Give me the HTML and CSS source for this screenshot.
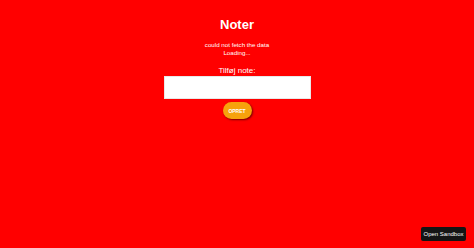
FILE: index.html
```html
<!DOCTYPE html>
<html lang="da">
<head>
<meta charset="utf-8">
<title>Noter</title>
<link rel="stylesheet" href="styles.css">
</head>
<body>
<div class="app">
  <h1 class="title">Noter</h1>
  <div class="status">
    <div>could not fetch the data</div>
    <div>Loading...</div>
  </div>
  <label class="label" for="note">Tilføj note:</label>
  <input class="note-input" id="note" type="text">
  <button class="create-btn" type="button">OPRET</button>
</div>
<a class="sandbox-btn" href="#">Open Sandbox</a>
</body>
</html>
```
FILE: styles.css
```css
html, body {
  margin: 0;
  height: 100%;
}
body {
  background: #ff0000;
  color: #ffffff;
  font-family: "Liberation Sans", Arial, sans-serif;
}
.app {
  display: flex;
  flex-direction: column;
  align-items: center;
  padding-top: 17px;
}
.title {
  margin: 0;
  font-size: 13px;
  line-height: 16px;
  font-weight: bold;
}
.status {
  margin-top: 8px;
  font-size: 6.2px;
  line-height: 8px;
  text-align: center;
}
.label {
  margin-top: 9px;
  font-size: 8px;
  line-height: 10px;
}
.note-input {
  box-sizing: border-box;
  width: 147px;
  height: 23px;
  margin: 0;
  border: 1px solid #e8e8e8;
  background: #ffffff;
  padding: 0;
}
.create-btn {
  margin-top: 3px;
  width: 29px;
  height: 17px;
  border: none;
  border-radius: 9px;
  background: #f7a20c;
  color: #ffffff;
  font-family: "Liberation Sans", Arial, sans-serif;
  font-weight: bold;
  font-size: 5px;
  padding: 0;
  box-shadow: 1px 1px 2px rgba(60, 0, 0, 0.7);
}
.sandbox-btn {
  position: fixed;
  right: 8px;
  bottom: 7px;
  width: 45px;
  height: 14px;
  display: flex;
  align-items: center;
  justify-content: center;
  background: #151515;
  color: #ffffff;
  font-size: 6px;
  text-decoration: none;
  border-radius: 2px;
}
```
